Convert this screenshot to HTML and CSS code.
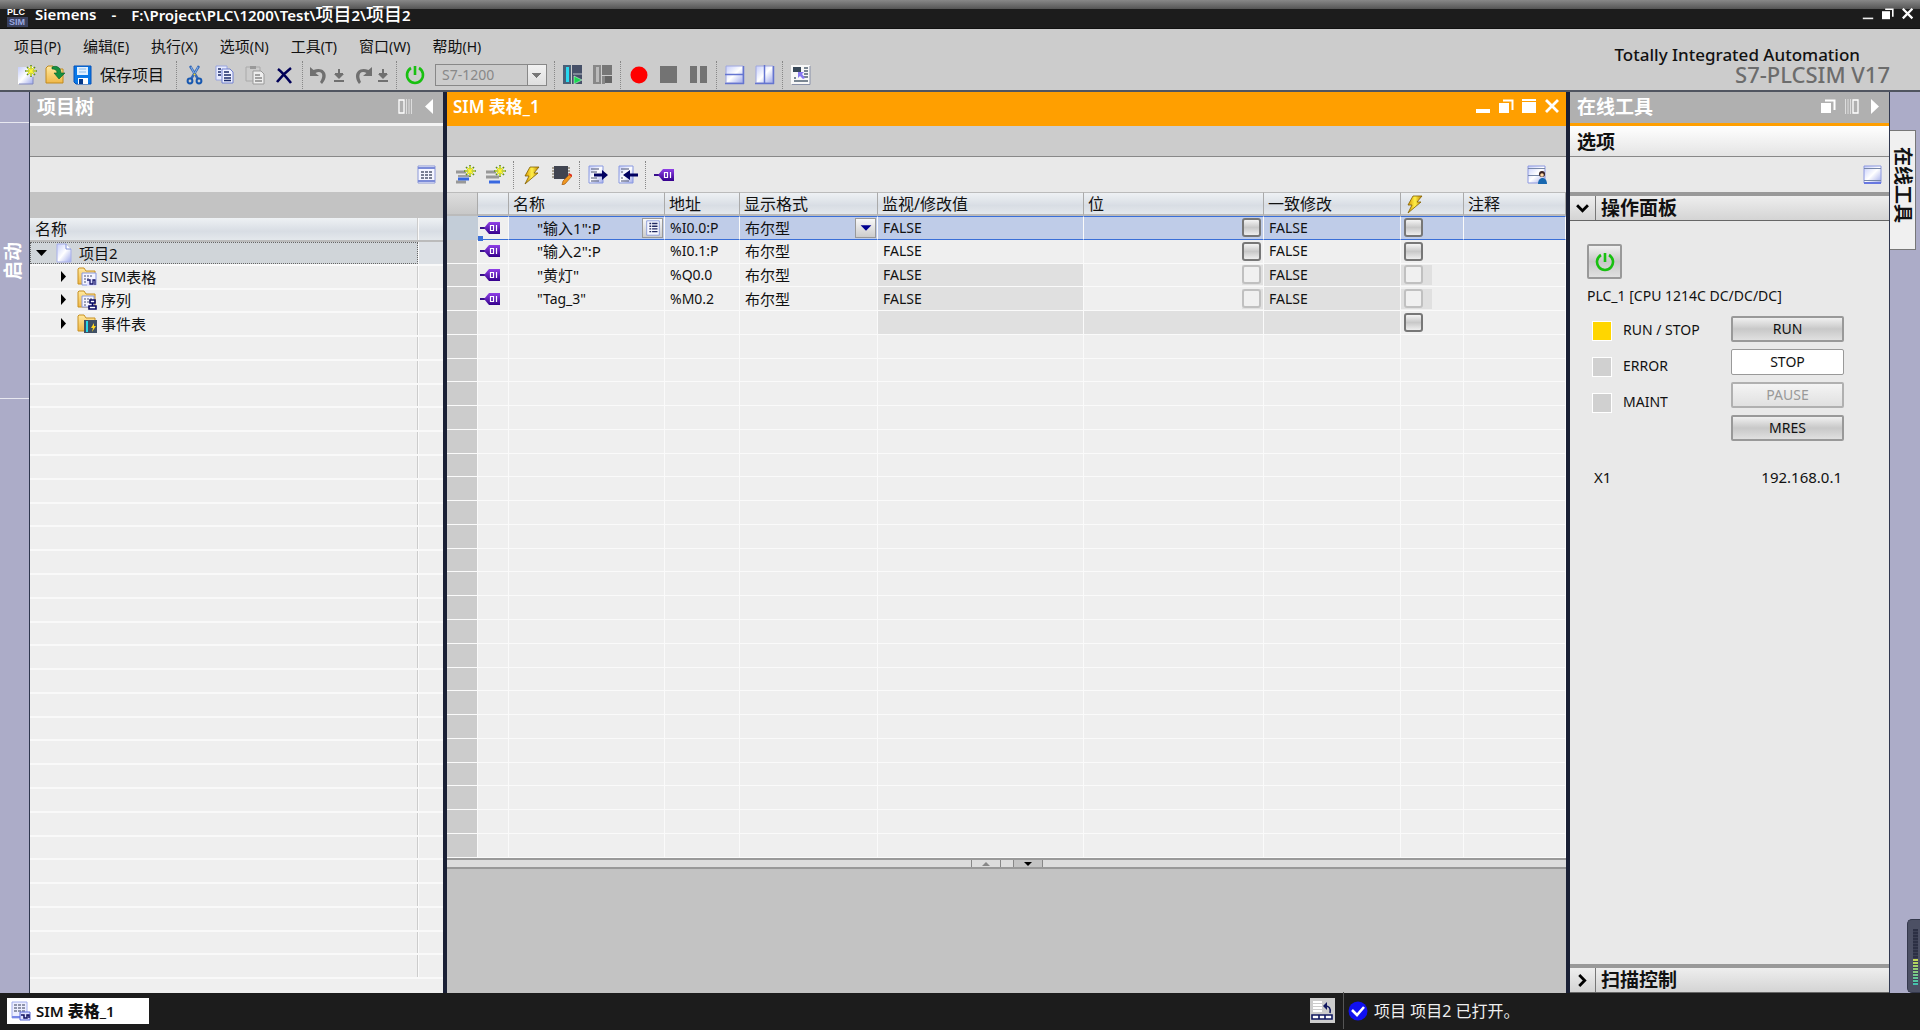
FILE: index.html
```html
<!DOCTYPE html>
<html lang="zh-CN">
<head>
    <meta charset="UTF-8">
    <meta name="viewport" content="width=device-width, initial-scale=1.0">
    <title>Siemens - S7-PLCSIM V17</title>
    <link rel="stylesheet" href="styles.css">
</head>
<body>
    <!-- Icon definitions -->
    <svg class="defs" width="0" height="0">
        <defs>
            <linearGradient id="gPaper" x1="0" y1="0" x2="1" y2="1"><stop offset="0" stop-color="#c5cdfa"/><stop offset=".5" stop-color="#fff"/><stop offset="1" stop-color="#9fa9ea"/></linearGradient>
            <linearGradient id="gFolder" x1="0" y1="0" x2="0" y2="1"><stop offset="0" stop-color="#ffe9a0"/><stop offset="1" stop-color="#f0b848"/></linearGradient>
            <linearGradient id="gTag" x1="0" y1="0" x2="0" y2="1"><stop offset="0" stop-color="#9040e8"/><stop offset="1" stop-color="#35008c"/></linearGradient>
            <linearGradient id="gFlash" x1="0" y1="0" x2="1" y2="0"><stop offset="0" stop-color="#d89400"/><stop offset=".5" stop-color="#fff04a"/><stop offset="1" stop-color="#c08000"/></linearGradient>
            <symbol id="star" viewBox="0 0 12 12"><path d="M6 0v12M0 6h12M2 2l8 8M10 2l-8 8" stroke="#5c8a2c" stroke-width="1.6"/><path d="M6 1v10M1 6h10M3 3l6 6M9 3l-6 6" stroke="#fff733" stroke-width="1.2"/></symbol>
            <symbol id="new" viewBox="0 0 20 20"><path d="M1 2h15v17H1z" fill="url(#gPaper)"/><path d="M16 12v7H2" fill="none" stroke="#8088c0"/><use href="#star" x="8" y="0" width="12" height="12"/></symbol>
            <symbol id="open" viewBox="0 0 20 20"><path d="M1 3l2-2h5l2 3h8v14H1z" fill="url(#gFolder)" stroke="#c08a20"/><path d="M7 2c5-2 9 1 9 6h4l-6 6-5-6h3c0-3-2-4-5-4z" fill="#159040" stroke="#086028" stroke-width=".6"/></symbol>
            <symbol id="save" viewBox="0 0 20 20"><path d="M1 1h17v18H3l-2-2z" fill="#0878e8" stroke="#0450b8"/><path d="M4 2h11v8H4z" fill="#e0f0ff"/><path d="M6 4h7M6 7h7" stroke="#88b8e8"/><path d="M5 13h10v6H5z" fill="#fff"/><path d="M6 14h4v5H6z" fill="#063888"/></symbol>
            <symbol id="cut" viewBox="0 0 20 20"><path d="M5 1l8 13M14 1L6 14" stroke="#3468b8" stroke-width="2.4"/><path d="M6 2l3 6M13 2l-3 6" stroke="#8ab4e8"/><circle cx="5" cy="16" r="2.4" fill="none" stroke="#1858b0" stroke-width="2"/><circle cx="14" cy="16" r="2.4" fill="none" stroke="#1858b0" stroke-width="2"/><circle cx="9.500" cy="9.500" r="1" fill="#ffd820"/></symbol>
            <symbol id="copy" viewBox="0 0 20 20"><path d="M1 1h11v14H1z" fill="#e8ecff" stroke="#98a4e0"/><path d="M3 4h3M3 7h3M3 10h3" stroke="#182868" stroke-width="1.4"/><path d="M7 4h8l3 3v11H7z" fill="#eef0ff" stroke="#7080d0"/><path d="M9 7h5M9 10h7M9 13h7M9 15.500h7" stroke="#182868" stroke-width="1.400"/></symbol>
            <symbol id="paste" viewBox="0 0 20 20"><path d="M1 2h14v14H1z" fill="#ccc" stroke="#aaa"/><path d="M5 1h6v3H5z" fill="#999"/><path d="M8 6h8l3 3v10H8z" fill="#eee" stroke="#999"/><path d="M10 10h5M10 13h7M10 16h7" stroke="#888" stroke-width="1.400"/></symbol>
            <symbol id="delete" viewBox="0 0 20 20"><path d="M3 4c4 3 9 9 13 14M16 3C12 6 6 12 2 17" stroke="#000058" stroke-width="2.600" fill="none"/></symbol>
            <symbol id="undo" viewBox="0 0 20 20"><path d="M1 2v9h9L6.500 8C12 5 16 9 11 17l2 2C21 10 15 1 4.500 5z" fill="#707070"/></symbol>
            <symbol id="redo" viewBox="0 0 20 20"><path d="M19 2v9h-9l3.500-3C8 5 4 9 8 17l-2 2C-1 10 5 1 15.500 5z" fill="#707070"/></symbol>
            <symbol id="plusminus" viewBox="0 0 12 20"><path d="M6 4v6M2 9h8M1 16h10" stroke="#707070" stroke-width="2"/><path d="M1 9h10l-5 5z" fill="#707070"/></symbol>
            <symbol id="power" viewBox="0 0 20 20"><path d="M6 3a8 8 0 1 0 8 0" fill="none" stroke="#18c010" stroke-width="2.600"/><path d="M10 1v9" stroke="#18c010" stroke-width="2.600"/></symbol>
            <symbol id="simstart" viewBox="0 0 20 20"><path d="M0 0h8v19H0z" fill="#4a6078"/><path d="M3 2h3v15H3z" fill="#28d8f0"/><path d="M9 0h10v19H9z" fill="#465068"/><path d="M10 8h9v2h-9z" fill="#808898"/><path d="M11 11l8 4-8 4z" fill="#18d850" stroke="#fff" stroke-width=".5"/></symbol>
            <symbol id="simstop" viewBox="0 0 20 20"><path d="M0 0h8v19H0z" fill="#888"/><path d="M3 2h3v15H3z" fill="#bbb"/><path d="M9 0h10v10H9z" fill="#777"/><path d="M9 11h3v8H9z" fill="#888"/><path d="M12 11h7v7h-7z" fill="#666"/></symbol>
            <symbol id="record" viewBox="0 0 20 20"><circle cx="10" cy="10" r="8.500" fill="#f00"/></symbol>
            <symbol id="stop" viewBox="0 0 20 20"><path d="M1 1h17v17H1z" fill="#737373"/></symbol>
            <symbol id="pause" viewBox="0 0 20 20"><path d="M1 1h7v17H1zM11 1h7v17h-7z" fill="#737373"/></symbol>
            <symbol id="splith" viewBox="0 0 20 20"><path d="M1 1h17v17H1z" fill="url(#gPaper)" stroke="#a0a8e0"/><path d="M0 9.500h19M0 18.500h19M18.500 1v18" stroke="#6474d0" stroke-width="1.500"/></symbol>
            <symbol id="splitv" viewBox="0 0 20 20"><path d="M1 1h17v17H1z" fill="url(#gPaper)" stroke="#a0a8e0"/><path d="M9.500 0v19M0 18.500h19M18.500 1v18" stroke="#6474d0" stroke-width="1.500"/></symbol>
            <symbol id="report" viewBox="0 0 20 20"><path d="M0 0h19v19H0z" fill="#f8f8f8"/><path d="M19 1v18.500H1" fill="none" stroke="#8890a8"/><path d="M2 2h8v5H2z" fill="#384858"/><path d="M13 3h4M13 6h4M13 9h4M12 12h5M3 13h2M3 16h14" stroke="#506070" stroke-width="1.300"/><path d="M7 7h6l-2 2 3 4-2 1-3-3-2 2z" fill="#8878f0"/></symbol>
            <symbol id="gridview" viewBox="0 0 20 20"><path d="M1 1h17v17H1z" fill="#f5f6ff" stroke="#8c98d8"/><path d="M1 3h17M1 16h17" stroke="#7c8cd8" stroke-width="2"/><path d="M4 7h3m1 0h3m1 0h3M4 10h3m1 0h3m1 0h3M4 13h3m1 0h3m1 0h3" stroke="#505870" stroke-width="1.300"/></symbol>
            <symbol id="window" viewBox="0 0 20 20"><path d="M1 1h17v17H1z" fill="url(#gPaper)" stroke="#8c98e0"/><path d="M1 3.500h17M1 15.500h17" stroke="#7888a8"/><path d="M1 18h17" stroke="#6878e0" stroke-width="2"/></symbol>
            <symbol id="userwin" viewBox="0 0 20 20"><path d="M1 1h17v17H1z" fill="url(#gPaper)" stroke="#8c98e0"/><path d="M1 3.500h17M1 10.500h17" stroke="#7888a8"/><circle cx="15" cy="9" r="3" fill="#382020"/><circle cx="15" cy="10" r="1.800" fill="#ffd8a8"/><path d="M11 19c0-8 9-8 9 0z" fill="#1868b0"/></symbol>
            <symbol id="addrow" viewBox="0 0 20 20"><path d="M0 7h10M0 17h10" stroke="#989898" stroke-width="3"/><path d="M2 11h12" stroke="#a0a0a0" stroke-width="2"/><path d="M2 14h11" stroke="#3868e0" stroke-width="3"/><use href="#star" x="8" y="0" width="12" height="12"/></symbol>
            <symbol id="insrow" viewBox="0 0 20 20"><path d="M0 7h10M0 12h13" stroke="#989898" stroke-width="3"/><path d="M3 17h11" stroke="#3868e0" stroke-width="3"/><use href="#star" x="8" y="0" width="12" height="12"/></symbol>
            <symbol id="flash" viewBox="0 0 20 20"><path d="M8 2h9l-5 6h4L3 19l4-8H3z" fill="url(#gFlash)" stroke="#806000" stroke-width=".8"/></symbol>
            <symbol id="chip" viewBox="0 0 20 20"><path d="M0 3h18M0 6h18M0 9h18M0 12h16" stroke="#908878" stroke-width="1.500"/><path d="M2 1h14v13H2z" fill="#404450"/><path d="M18 9l2 2-7 8-3 1 1-4z" fill="#f09820" stroke="#a05810" stroke-width=".7"/><path d="M17 9l3 2" stroke="#e03020" stroke-width="2"/></symbol>
            <symbol id="export" viewBox="0 0 20 20"><path d="M1 1h14v17H1z" fill="url(#gPaper)" stroke="#8898e0"/><path d="M3 4h8M3 7h6M3 13h6M3 16h8" stroke="#485070"/><path d="M6 8.500h8V5l6 5-6 5v-3.500H6z" fill="#000060"/></symbol>
            <symbol id="import" viewBox="0 0 20 20"><path d="M1 1h14v17H1z" fill="url(#gPaper)" stroke="#8898e0"/><path d="M3 4h8M3 7h2M3 13h2M3 16h8" stroke="#485070"/><path d="M20 8.500h-8V5l-7 5 7 5v-3.500h8z" fill="#000060"/></symbol>
            <symbol id="tag" viewBox="0 0 20 20"><path d="M0 10h5" stroke="#38108c" stroke-width="2"/><path d="M4 10l5-6h11v12H9z" fill="url(#gTag)"/><path d="M10.500 7.500h3v5h-3z" fill="none" stroke="#fff" stroke-width="1.200"/><path d="M16.500 7v6" stroke="#fff" stroke-width="1.200"/></symbol>
            <symbol id="list" viewBox="0 0 20 20"><path d="M3 2h14v16H3z" fill="#f6f7ff" stroke="#8898d8"/><path d="M6 5h2m1 0h6M6 8h2m1 0h6M6 11h2m1 0h6M6 14h2m1 0h6" stroke="#202860" stroke-width="1.500"/></symbol>
            <symbol id="seldown" viewBox="0 0 20 20"><path d="M4 7h12l-6 6z" fill="#000090"/></symbol>
            <symbol id="page" viewBox="0 0 20 20"><path d="M2 1h9l5 5v13H2z" fill="url(#gPaper)" stroke="#a8b0e8"/><path d="M11 1v5h5" fill="#fff" stroke="#8090d8"/></symbol>
            <symbol id="foldsim" viewBox="0 0 20 20"><path d="M1 17V2l1-1h5l2 3h9v13z" fill="url(#gFolder)" stroke="#c89020"/><path d="M5 6h14v12H5z" fill="#f4f4ff" stroke="#8898e0"/><path d="M7 9h2m1 0h2m1 0h2M7 12h2m1 0h2M7 15h2" stroke="#485070"/><path d="M10 12h9v7h-9z" fill="#e0e0ff"/><path d="M10 13h3v4h3v-4h2v5" fill="none" stroke="#18186c" stroke-width="1.300"/></symbol>
            <symbol id="foldseq" viewBox="0 0 20 20"><path d="M1 17V2l1-1h5l2 3h9v13z" fill="url(#gFolder)" stroke="#c89020"/><path d="M5 6h12v11H5z" fill="#f4f4ff" stroke="#8898e0"/><path d="M7 9h2m1 0h2m1 0h2M7 12h2m1 0h2M7 15h2" stroke="#485070"/><path d="M13 10h5v3h-5zM12 16h7v3h-7zM15.500 13v3" fill="#fff" stroke="#080860" stroke-width="1.600"/></symbol>
            <symbol id="foldevt" viewBox="0 0 20 20"><path d="M1 17V2l1-1h5l2 3h9v13z" fill="url(#gFolder)" stroke="#c89020"/><path d="M7 6h13v13H7z" fill="#405064"/><path d="M9 7h2v11H9z" fill="#28d8e8"/><path d="M17 9l-3 5h2l-1 4 4-6h-2z" fill="#ffd820"/></symbol>
            <symbol id="simtab" viewBox="0 0 20 20"><path d="M1 1h15v16H1z" fill="#eceeff" stroke="#a0acec"/><path d="M3 4h3m1 0h3m1 0h3M3 7h3m1 0h3m1 0h3M3 10h3m1 0h3m1 0h3" stroke="#707890" stroke-width="1.300"/><path d="M1 16h8" stroke="#7888e8" stroke-width="2"/><path d="M9 11h10v8H9z" fill="#dfe2ff" stroke="#5868d8"/><path d="M10 14h3v3h3v-3h2v3" fill="none" stroke="#101060" stroke-width="1.500"/></symbol>
            <symbol id="columns" viewBox="0 0 15 15"><path d="M1 1h5v13H1z" fill="none" stroke="#fff" stroke-width="1.300"/><path d="M8.500 0v15M11 0v15M13.500 0v15" stroke="#ddd"/></symbol>
            <symbol id="restore" viewBox="0 0 15 15"><path d="M0 4h10v10H0z" fill="#fff"/><path d="M4 1.500h9.500V11" fill="none" stroke="#fff" stroke-width="2"/></symbol>
            <symbol id="minimize" viewBox="0 0 15 15"><path d="M0 10h14v4H0z" fill="#fff"/></symbol>
            <symbol id="minline" viewBox="0 0 15 15"><path d="M1 13h13" stroke="#eee" stroke-width="2"/></symbol>
            <symbol id="maximize" viewBox="0 0 15 15"><path d="M0 0h14v2H0zM0 3h14v11H0z" fill="#fff"/></symbol>
            <symbol id="close" viewBox="0 0 15 15"><path d="M1 1l12 12M13 1L1 13" stroke="#fff" stroke-width="2.800"/></symbol>
            <symbol id="left" viewBox="0 0 15 15"><path d="M12 0v15L4 7.500z" fill="#fff"/></symbol>
            <symbol id="right" viewBox="0 0 15 15"><path d="M4 0v15l8-7.500z" fill="#fff"/></symbol>
            <symbol id="treeopen" viewBox="0 0 12 12"><path d="M0 3h11L5.500 9z" fill="#000"/></symbol>
            <symbol id="treeclosed" viewBox="0 0 12 12"><path d="M3 0v11l5-5.500z" fill="#000"/></symbol>
            <symbol id="chevdown" viewBox="0 0 12 12"><path d="M1 3l5 5 5-5" fill="none" stroke="#000" stroke-width="2.600"/></symbol>
            <symbol id="chevright" viewBox="0 0 12 12"><path d="M3 1l5 5-5 5" fill="none" stroke="#000" stroke-width="2.600"/></symbol>
        </defs>
    </svg>

    <!-- Title bar -->
    <header class="titlebar">
        <div class="logo"><span>PLC</span><span class="logo-sim">SIM</span></div>
        <h1><span>Siemens</span><span>-</span><span>F:\Project\PLC\1200\Test\<b>项目</b>2\<b>项目</b>2</span></h1>
        <div class="window-buttons">
            <button aria-label="最小化"><svg><use href="#minline"/></svg></button>
            <button aria-label="还原"><svg><use href="#restore"/></svg></button>
            <button aria-label="关闭"><svg><use href="#close"/></svg></button>
        </div>
    </header>

    <!-- Menu and main toolbar -->
    <div class="topbar">
        <div class="topbar-left">
            <nav class="menu">
                <a href="#">项目<span>(P)</span></a>
                <a href="#">编辑<span>(E)</span></a>
                <a href="#">执行<span>(X)</span></a>
                <a href="#">选项<span>(N)</span></a>
                <a href="#">工具<span>(T)</span></a>
                <a href="#">窗口<span>(W)</span></a>
                <a href="#">帮助<span>(H)</span></a>
            </nav>
            <div class="toolbar main-toolbar">
                <div class="tool-group tool-file">
                    <button class="tool" aria-label="新建"><svg><use href="#new"/></svg></button>
                    <button class="tool" aria-label="打开"><svg><use href="#open"/></svg></button>
                    <button class="tool tool-save"><svg><use href="#save"/></svg>保存项目</button>
                </div>
                <div class="tool-group">
                    <button class="tool" aria-label="剪切"><svg><use href="#cut"/></svg></button>
                    <button class="tool" aria-label="复制"><svg><use href="#copy"/></svg></button>
                    <button class="tool" aria-label="粘贴"><svg><use href="#paste"/></svg></button>
                    <button class="tool" aria-label="删除"><svg><use href="#delete"/></svg></button>
                </div>
                <div class="tool-group tool-history">
                    <button class="tool tool-wide" aria-label="撤销"><svg><use href="#undo"/></svg><svg class="narrow"><use href="#plusminus"/></svg></button>
                    <button class="tool tool-wide" aria-label="重做"><svg><use href="#redo"/></svg><svg class="narrow"><use href="#plusminus"/></svg></button>
                </div>
                <div class="tool-group">
                    <button class="tool" aria-label="电源"><svg><use href="#power"/></svg></button>
                    <select class="cpu-select" aria-label="CPU" disabled><option>S7-1200</option></select>
                </div>
                <div class="tool-group">
                    <button class="tool" aria-label="启动仿真"><svg><use href="#simstart"/></svg></button>
                    <button class="tool" aria-label="停止仿真"><svg><use href="#simstop"/></svg></button>
                </div>
                <div class="tool-group">
                    <button class="tool" aria-label="录制"><svg><use href="#record"/></svg></button>
                    <button class="tool" aria-label="停止"><svg><use href="#stop"/></svg></button>
                    <button class="tool" aria-label="暂停"><svg><use href="#pause"/></svg></button>
                </div>
                <div class="tool-group">
                    <button class="tool" aria-label="水平拆分"><svg><use href="#splith"/></svg></button>
                    <button class="tool" aria-label="垂直拆分"><svg><use href="#splitv"/></svg></button>
                </div>
                <div class="tool-group">
                    <button class="tool" aria-label="报告"><svg><use href="#report"/></svg></button>
                </div>
            </div>
        </div>
        <div class="brand">
            <p class="brand-name">Totally Integrated Automation</p>
            <p class="brand-product">S7-PLCSIM V17</p>
        </div>
    </div>

    <main>
        <!-- Left side strip -->
        <aside class="strip strip-left"><div class="strip-tab">启动</div></aside>

        <!-- Project tree -->
        <section class="panel tree-panel">
            <div class="panel-head">
                <h2>项目树</h2>
                <button aria-label="列"><svg><use href="#columns"/></svg></button>
                <button aria-label="折叠"><svg><use href="#left"/></svg></button>
            </div>
            <div class="band"></div>
            <div class="toolbar tree-toolbar">
                <button class="tool" aria-label="视图"><svg><use href="#gridview"/></svg></button>
            </div>
            <div class="tree-gap"></div>
            <div class="tree-row tree-head"><span class="tree-name">名称</span><span class="tree-side"></span></div>
            <div class="tree" id="tree">
                <div class="tree-row selected"><span class="tree-name"><svg class="arrow"><use href="#treeopen"/></svg><svg class="icon"><use href="#page"/></svg>项目2</span><span class="tree-side"></span></div>
                <div class="tree-row child"><span class="tree-name"><svg class="arrow"><use href="#treeclosed"/></svg><svg class="icon"><use href="#foldsim"/></svg><span class="latin">SIM</span>表格</span><span class="tree-side"></span></div>
                <div class="tree-row child"><span class="tree-name"><svg class="arrow"><use href="#treeclosed"/></svg><svg class="icon"><use href="#foldseq"/></svg>序列</span><span class="tree-side"></span></div>
                <div class="tree-row child"><span class="tree-name"><svg class="arrow"><use href="#treeclosed"/></svg><svg class="icon"><use href="#foldevt"/></svg>事件表</span><span class="tree-side"></span></div>
            </div>
        </section>

        <!-- SIM table editor -->
        <section class="panel editor">
            <div class="panel-head active">
                <h2>SIM 表格_1</h2>
                <button aria-label="最小化"><svg><use href="#minimize"/></svg></button>
                <button aria-label="还原"><svg><use href="#restore"/></svg></button>
                <button aria-label="最大化"><svg><use href="#maximize"/></svg></button>
                <button aria-label="关闭"><svg><use href="#close"/></svg></button>
            </div>
            <div class="band"></div>
            <div class="toolbar">
                <div class="tool-group">
                    <button class="tool" aria-label="插入行"><svg><use href="#addrow"/></svg></button>
                    <button class="tool" aria-label="添加行"><svg><use href="#insrow"/></svg></button>
                </div>
                <div class="tool-group">
                    <button class="tool" aria-label="修改"><svg><use href="#flash"/></svg></button>
                    <button class="tool" aria-label="修改值"><svg><use href="#chip"/></svg></button>
                </div>
                <div class="tool-group">
                    <button class="tool" aria-label="导出"><svg><use href="#export"/></svg></button>
                    <button class="tool" aria-label="导入"><svg><use href="#import"/></svg></button>
                </div>
                <div class="tool-group">
                    <button class="tool" aria-label="变量"><svg><use href="#tag"/></svg></button>
                </div>
                <button class="tool tool-end" aria-label="布局"><svg><use href="#userwin"/></svg></button>
            </div>
            <div class="table-wrap">
                <table class="sim-table">
                    <colgroup>
                        <col class="c-gutter"><col class="c-icon"><col class="c-name"><col class="c-addr"><col class="c-format">
                        <col class="c-value"><col class="c-bits"><col class="c-modify"><col class="c-flash"><col>
                    </colgroup>
                    <thead>
                        <tr><th></th><th></th><th>名称</th><th>地址</th><th>显示格式</th><th>监视/修改值</th><th>位</th><th>一致修改</th><th><svg class="icon"><use href="#flash"/></svg></th><th>注释</th></tr>
                    </thead>
                    <tbody id="simRows">
                        <tr class="selected">
                            <td><i class="handle"></i></td>
                            <td><svg class="icon"><use href="#tag"/></svg></td>
                            <td class="name"><div class="cell">"输入1":P<button class="cell-button" aria-label="选择变量"><svg><use href="#list"/></svg></button></div></td>
                            <td>%I0.0:P</td>
                            <td class="cjk"><div class="cell">布尔型<button class="cell-button" aria-label="选择格式"><svg><use href="#seldown"/></svg></button></div></td>
                            <td>FALSE</td>
                            <td class="bits"><label><input type="checkbox" aria-label="位"></label></td>
                            <td>FALSE</td>
                            <td class="mod"><label><input type="checkbox" aria-label="修改"></label></td>
                            <td></td>
                        </tr>
                        <tr>
                            <td></td>
                            <td><svg class="icon"><use href="#tag"/></svg></td>
                            <td class="name">"输入2":P</td>
                            <td>%I0.1:P</td>
                            <td class="cjk">布尔型</td>
                            <td>FALSE</td>
                            <td class="bits"><label><input type="checkbox" aria-label="位"></label></td>
                            <td>FALSE</td>
                            <td class="mod"><label><input type="checkbox" aria-label="修改"></label></td>
                            <td></td>
                        </tr>
                        <tr>
                            <td></td>
                            <td><svg class="icon"><use href="#tag"/></svg></td>
                            <td class="name">"黄灯"</td>
                            <td>%Q0.0</td>
                            <td class="cjk">布尔型</td>
                            <td class="off">FALSE</td>
                            <td class="bits"><label class="off"><input type="checkbox" aria-label="位" disabled></label></td>
                            <td class="off">FALSE</td>
                            <td class="mod"><label class="off"><input type="checkbox" aria-label="修改" disabled></label></td>
                            <td></td>
                        </tr>
                        <tr>
                            <td></td>
                            <td><svg class="icon"><use href="#tag"/></svg></td>
                            <td class="name"><span class="latin">"Tag_3"</span></td>
                            <td>%M0.2</td>
                            <td class="cjk">布尔型</td>
                            <td class="off">FALSE</td>
                            <td class="bits"><label class="off"><input type="checkbox" aria-label="位" disabled></label></td>
                            <td class="off">FALSE</td>
                            <td class="mod"><label class="off"><input type="checkbox" aria-label="修改" disabled></label></td>
                            <td></td>
                        </tr>
                        <tr>
                            <td></td><td></td><td></td><td></td><td></td>
                            <td class="off"></td><td class="off"></td><td class="off"></td>
                            <td class="mod"><label><input type="checkbox" aria-label="修改"></label></td>
                            <td></td>
                        </tr>
                    </tbody>
                </table>
            </div>
            <div class="splitter">
                <button aria-label="向上"><svg viewBox="0 0 8 4"><path d="M0 4l4-4 4 4z" fill="#888"/></svg></button>
                <button aria-label="向下" class="down"><svg viewBox="0 0 8 4"><path d="M0 0l4 4 4-4z" fill="#000"/></svg></button>
            </div>
            <div class="editor-bottom"></div>
        </section>

        <!-- Online tools -->
        <section class="panel online-panel">
            <div class="panel-head">
                <h2>在线工具</h2>
                <button aria-label="还原"><svg><use href="#restore"/></svg></button>
                <button aria-label="列"><svg class="flip"><use href="#columns"/></svg></button>
                <button aria-label="折叠"><svg><use href="#right"/></svg></button>
            </div>
            <h3 class="options">选项</h3>
            <div class="toolbar tree-toolbar">
                <button class="tool" aria-label="视图"><svg><use href="#window"/></svg></button>
            </div>
            <h3 class="section-head"><span><svg><use href="#chevdown"/></svg></span>操作面板</h3>
            <div class="operator">
                <button class="power-button" aria-label="电源"><svg><use href="#power"/></svg></button>
                <p>PLC_1 [CPU 1214C DC/DC/DC]</p>
                <div class="controls">
                    <ul class="leds">
                        <li><i class="led on"></i>RUN / STOP</li>
                        <li><i class="led"></i>ERROR</li>
                        <li><i class="led"></i>MAINT</li>
                    </ul>
                    <div class="mode-buttons">
                        <button>RUN</button>
                        <button class="pressed">STOP</button>
                        <button disabled>PAUSE</button>
                        <button>MRES</button>
                    </div>
                </div>
                <div class="address"><span>X1</span><span>192.168.0.1</span></div>
            </div>
            <h3 class="section-head"><span><svg><use href="#chevright"/></svg></span>扫描控制</h3>
        </section>

        <!-- Right side strip -->
        <aside class="strip strip-right">
            <button class="side-tab">在线工具</button>
            <div class="meter">
                <div class="meter-bars"></div>
            </div>
        </aside>
    </main>

    <!-- Status bar -->
    <footer>
        <button class="task"><svg class="icon"><use href="#simtab"/></svg><span>SIM <b>表格</b>_1</span></button>
        <div class="status">
            <svg class="status-icon" viewBox="0 0 25 25"><path d="M0 0h25v25H0z" fill="#ccc"/><path d="M3 4h9M3 7h9M3 10h9M3 13h9" stroke="#fff" stroke-width="2"/><path d="M2 17h20v4H2z" fill="#fff" stroke="#101860" stroke-width="1.600"/><path d="M9 17v4M15 17v4" stroke="#101860" stroke-width="1.600"/><path d="M20 15c1-5-1-7-5-7" fill="none" stroke="#101860" stroke-width="1.600"/><path d="M13 8l4-4v8z" fill="#101860"/></svg>
            <span class="message"><svg viewBox="0 0 20 20"><circle cx="10" cy="10" r="9.500" fill="#1010f0"/><path d="M4 9l5 5 7-8" fill="none" stroke="#fff" stroke-width="2.600"/></svg>项目 项目2 已打开。</span>
        </div>
    </footer>
    <script src="script.js"></script>
</body>
</html>
```
FILE: styles.css
```css
/* Basic reset */
* {
    margin: 0;
    padding: 0;
    box-sizing: border-box;
}

body {
    display: flex;
    flex-direction: column;
    height: 100vh;
    overflow: hidden;
    background-color: #1c1c1c;
    color: #111;
    font-family: "Noto Sans", "Noto Sans CJK SC", sans-serif;
    font-size: 14px;
    line-height: 20px;
}

button {
    border: none;
    background: none;
    font: inherit;
    color: inherit;
}

svg {
    display: block;
    flex: none;
}

.defs {
    position: absolute;
}

.latin {
    font-size: 14px;
}

.icon {
    width: 20px;
    height: 20px;
}

/* Title bar */
.titlebar {
    display: flex;
    align-items: center;
    flex: none;
    height: 29px;
    padding: 0 6px 0 7px;
    background: linear-gradient(#888, #555 9px, #1c1c1c 9px);
    border-bottom: 1px solid #111;
    color: #fff;
}

.logo {
    display: flex;
    flex-direction: column;
    width: 21px;
    margin-top: 5px;
    font-family: "Liberation Sans", sans-serif;
    font-size: 9px;
    font-weight: 700;
    line-height: 10px;
}

.logo-sim {
    padding-left: 2px;
    background-color: #39405c;
    color: #9aa8e0;
}

.titlebar h1 {
    display: flex;
    gap: 15px;
    margin-left: 7px;
    font-size: 15px;
    font-weight: 600;
}

.titlebar b {
    font-size: 18px;
    font-weight: 500;
}

.window-buttons {
    display: flex;
    gap: 8px;
    margin-left: auto;
}

.window-buttons svg {
    width: 12px;
    height: 12px;
}

/* Menu and main toolbar */
.topbar {
    display: flex;
    justify-content: space-between;
    flex: none;
    height: 63px;
    background-color: #ccc;
    border-bottom: 2px solid #505560;
}

.menu {
    display: flex;
    gap: 22px;
    height: 30px;
    padding: 7px 0 0 14px;
}

.menu a {
    color: #111;
    font-size: 15px;
    text-decoration: none;
}

.menu span {
    font-size: 14px;
}

.toolbar {
    display: flex;
    align-items: center;
    flex: none;
    height: 35px;
    background-color: #e9e9e9;
}

.main-toolbar {
    height: 31px;
    padding-left: 8px;
    background: none;
}

.tool-group {
    display: flex;
    align-items: center;
    gap: 10px;
    height: 28px;
    padding: 0 7px 0 8px;
    border-left: 1px dotted #888;
}

.tool-group:first-child {
    border-left-color: transparent;
}

.tool-file {
    gap: 8px;
}

.tool {
    display: flex;
    align-items: center;
    height: 20px;
}

.tool svg {
    width: 20px;
    height: 20px;
}

.tool-save {
    gap: 7px;
    padding-right: 5px;
    font-size: 16px;
}

.tool-history {
    gap: 8px;
    padding-left: 6px;
}

.tool-wide {
    gap: 4px;
}

.tool .narrow {
    width: 12px;
}

.tool-end {
    margin-left: auto;
    margin-right: 19px;
}

.cpu-select {
    width: 112px;
    height: 22px;
    padding-left: 6px;
    appearance: none;
    border: 1px solid #888;
    border-radius: 0;
    background: linear-gradient(#888, #888) right 18px top / 1px 22px no-repeat,
        linear-gradient(45deg, transparent 50%, #777 50%) right 9px top 8px / 5px 5px no-repeat,
        linear-gradient(315deg, transparent 50%, #777 50%) right 4px top 8px / 5px 5px no-repeat,
        linear-gradient(#f2f2f2, #ddd) right top / 18px 22px no-repeat,
        #ccc;
    color: #888;
    font: inherit;
    opacity: 1;
}

.brand {
    padding: 16px 30px 0 0;
    text-align: right;
}

.brand-name {
    padding-right: 30px;
    font-size: 17px;
    font-weight: 500;
}

.brand-product {
    color: #6c6c6c;
    font-size: 22px;
    font-weight: 500;
    line-height: 18px;
}

/* Main layout */
main {
    display: flex;
    flex: 1;
    min-height: 0;
}

.strip {
    display: flex;
    flex: none;
    flex-direction: column;
    background-color: #acacc8;
}

.strip-left {
    width: 30px;
    padding-top: 30px;
    border-right: 1px solid #303850;
}

.strip-tab {
    display: flex;
    align-items: center;
    justify-content: center;
    height: 277px;
    padding-left: 4px;
    border: solid #e8e8f0;
    border-width: 1px 0;
    color: #fff;
    font-size: 19px;
    font-weight: 600;
    writing-mode: vertical-rl;
    text-orientation: sideways;
    transform: rotate(180deg);
}

.strip-right {
    width: 31px;
    padding-top: 38px;
    border-left: 1px solid #303850;
}

.side-tab {
    width: 26px;
    height: 120px;
    padding-top: 16px;
    background-color: #f0f0f0;
    border: 1px solid #777;
    border-left: none;
    font-size: 19px;
    font-weight: 700;
    line-height: 24px;
    text-align: left;
    writing-mode: vertical-rl;
    text-orientation: sideways;
}

.meter {
    width: 13px;
    height: 74px;
    margin: auto 0 0 auto;
    padding: 9px 2px 8px 5px;
    background-color: #4c5064;
    border: 1px solid #34384c;
    border-right: none;
    border-radius: 5px 0 0 5px;
}

.meter-bars {
    height: 56px;
    background: repeating-linear-gradient(transparent 0 2px, #3c4054 2px 3px),
        linear-gradient(#2c3044 30px, #c8d850 30px, #40c0b0);
}

/* Panels */
.panel {
    display: flex;
    flex-direction: column;
    min-width: 0;
    background-color: #efefef;
}

.panel-head {
    display: flex;
    align-items: center;
    gap: 8px;
    flex: none;
    height: 34px;
    padding: 0 7px 2px;
    background-color: #b0b0b0;
    border-bottom: 3px solid #f4f4f4;
    color: #fff;
}

.panel-head h2 {
    flex: 1;
    font-size: 19px;
    font-weight: 600;
}

.panel-head svg {
    width: 15px;
    height: 15px;
}

.panel-head .flip {
    transform: scaleX(-1);
}

.panel-head.active {
    padding: 0 6px 2px;
    background-color: #ff9f00;
    border-bottom-color: #ff9f00;
}

.panel-head.active h2 {
    font-size: 17px;
}

.band {
    flex: none;
    height: 31px;
    background-color: #ccc;
    border-bottom: 1px solid #888;
}

/* Project tree */
.tree-panel {
    width: 413px;
}

.tree-toolbar {
    justify-content: flex-end;
    padding-right: 6px;
}

.tree-gap {
    flex: none;
    height: 26px;
    background-color: #c3c3c3;
}

.tree-head {
    flex: none;
    height: 24px;
    background: linear-gradient(#eef1f4, #d8dde4 60%, #e4e8ec);
    border-bottom: 2px solid #bbb;
}

.tree-head .tree-name {
    padding-left: 5px;
    font-size: 16px;
}

.tree {
    display: flex;
    flex: 1;
    flex-direction: column;
    min-height: 0;
    padding-bottom: 14px;
}

.tree-row {
    display: flex;
}

.tree .tree-row {
    flex: 1;
    min-height: 0;
    border-bottom: 2px solid #f9f9f9;
}

.tree-name {
    display: flex;
    align-items: center;
    flex: 1;
    padding-left: 6px;
    border-right: 1px solid #ccc;
    font-size: 15px;
}

.tree-side {
    width: 25px;
    border-left: 1px solid #fafafa;
}

.tree .selected {
    background-color: #dce0e5;
}

.selected .tree-name {
    padding-left: 5px;
    background-color: #d0d5d9;
    border: 1px dotted #666;
}

.tree .arrow {
    width: 12px;
    height: 12px;
}

.tree .icon {
    margin: 0 4px 0 7px;
}

.child .tree-name {
    padding-left: 28px;
}

/* SIM table */
.editor {
    flex: 1;
    border: solid #1a2035;
    border-width: 0 4px;
}

.table-wrap {
    flex: 1;
    min-height: 0;
}

.sim-table {
    width: 100%;
    height: 100%;
    table-layout: fixed;
    border-collapse: separate;
    border-spacing: 0;
}

.c-gutter { width: 31px; }
.c-icon { width: 31px; }
.c-name { width: 156px; }
.c-addr { width: 75px; }
.c-format { width: 138px; }
.c-value { width: 206px; }
.c-bits { width: 180px; }
.c-modify { width: 137px; }
.c-flash { width: 63px; }

.sim-table th {
    height: 24px;
    padding-left: 4px;
    background: linear-gradient(#eef1f4, #d8dde4 60%, #e4e8ec);
    border-top: 1px solid #bbb;
    border-right: 1px solid #aaa;
    border-bottom: 2px solid #bbb;
    font-size: 16px;
    font-weight: 400;
    text-align: left;
}

.sim-table th:first-child {
    background: linear-gradient(#ddd, #c8c8c8);
}

.sim-table td {
    height: 22px;
    padding: 0 0 0 5px;
    border-right: 1px solid #fafafa;
    border-bottom: 1px solid #fafafa;
    line-height: 20px;
    white-space: nowrap;
}

.sim-table td:first-child {
    position: relative;
    background-color: #ccc;
}

.sim-table td:nth-child(2) {
    padding-left: 2px;
}

.sim-table .name {
    padding-left: 28px;
    font-size: 15px;
}

.sim-table .cjk {
    font-size: 15px;
}

.sim-table .off {
    background-color: #e0e0e0;
}

.sim-table .selected td {
    background-color: #bfcce8;
    border-top: 1px solid #3a6fd8;
    border-bottom: 1px solid #3a6fd8;
}

.sim-table .selected td:first-child {
    background-color: #c3cdd8;
    border-color: #c3cdd8;
}

.sim-table .selected td:nth-child(2) {
    background-color: #efefef;
}

.handle {
    position: absolute;
    right: -6px;
    bottom: -2px;
    z-index: 1;
    width: 5px;
    height: 5px;
    background-color: #3a6fd8;
}

.cell {
    display: flex;
    align-items: center;
    justify-content: space-between;
    height: 20px;
}

.cell-button {
    display: flex;
    align-items: center;
    justify-content: center;
    width: 21px;
    height: 20px;
    margin-right: 1px;
    background: linear-gradient(#f8f8f8, #ccc);
    border: 1px solid #999;
}

.cell-button svg {
    width: 18px;
    height: 18px;
}

.sim-table label {
    display: flex;
    align-items: center;
    height: 20px;
}

.sim-table .bits,
.sim-table .mod {
    padding: 0;
}

.bits label {
    width: 21px;
    margin-left: auto;
}

.mod label {
    width: 31px;
    padding-left: 3px;
}

.sim-table input {
    width: 19px;
    height: 19px;
    appearance: none;
    background: linear-gradient(#f4f4f4, #c8c8c8 50%, #eee);
    border: 2px solid #777;
    border-radius: 3px;
}

.sim-table input:disabled {
    background: #f0f0f0;
    border-color: #c0c0c0;
}

.splitter {
    display: flex;
    justify-content: center;
    gap: 12px;
    flex: none;
    height: 11px;
    background-color: #ddd;
    border-top: 2px solid #999;
    border-bottom: 2px solid #999;
}

.splitter button {
    display: flex;
    align-items: center;
    justify-content: center;
    width: 30px;
    border: solid #888;
    border-width: 0 1px;
}

.splitter .down {
    background-color: #c4c4c4;
}

.splitter svg {
    width: 8px;
    height: 4px;
}

.editor-bottom {
    flex: none;
    height: 124px;
    background-color: #c3c3c3;
}

/* Online tools */
.online-panel {
    width: 319px;
    background-color: #e9e9e9;
}

.online-panel .panel-head {
    border-bottom-color: #ff9f00;
}

.options {
    flex: none;
    height: 31px;
    padding: 6px 7px;
    background: linear-gradient(#fff, #e4e4e4);
    border-bottom: 1px solid #888;
    font-size: 19px;
}

.section-head {
    display: flex;
    align-items: center;
    flex: none;
    height: 29px;
    background: linear-gradient(#eee, #d4d4d4);
    border-top: 4px solid #999;
    border-bottom: 1px solid #666;
    font-size: 19px;
}

.section-head span {
    display: flex;
    align-items: center;
    width: 26px;
    height: 24px;
    margin-right: 5px;
    padding-left: 6px;
    border-right: 1px solid #777;
}

.section-head svg {
    width: 13px;
    height: 13px;
}

.operator {
    flex: 1;
    padding: 23px 45px 0 17px;
}

.power-button,
.mode-buttons button {
    background: linear-gradient(#f0f0f0, #c8c8c8 50%, #e0e0e0);
    border: 2px solid #999;
    border-radius: 2px;
}

.power-button {
    width: 35px;
    height: 35px;
    margin-bottom: 7px;
    padding-left: 6px;
}

.power-button svg {
    width: 20px;
    height: 20px;
}

.controls {
    display: flex;
    justify-content: space-between;
    margin-top: 10px;
}

.leds {
    display: flex;
    flex-direction: column;
    gap: 16px;
    padding: 5px 0 0 5px;
    list-style: none;
}

.leds li {
    display: flex;
    gap: 11px;
    height: 20px;
    line-height: 18px;
}

.led {
    width: 20px;
    height: 20px;
    background-color: #d0d0d0;
    border: 1px solid #fff;
}

.led.on {
    background-color: #ffd600;
}

.mode-buttons {
    display: flex;
    flex-direction: column;
    gap: 7px;
}

.mode-buttons button {
    width: 113px;
    height: 26px;
    line-height: 20px;
}

.mode-buttons .pressed {
    background: #fff;
    border-width: 1px;
}

.mode-buttons button:disabled {
    background: linear-gradient(#f4f4f4, #e0e0e0);
    border-color: #b0b0b0;
    color: #999;
}

.address {
    display: flex;
    justify-content: space-between;
    margin-top: 26px;
    padding: 0 2px 0 7px;
    font-size: 15px;
}

/* Status bar */
footer {
    display: flex;
    align-items: center;
    justify-content: space-between;
    flex: none;
    height: 37px;
    padding: 0 0 2px 7px;
    background-color: #1c1c1c;
    color: #eee;
}

.task {
    display: flex;
    align-items: center;
    gap: 5px;
    width: 142px;
    height: 26px;
    padding-left: 4px;
    background-color: #fff;
    color: #111;
    font-size: 15px;
    font-weight: 600;
}

.task b {
    font-size: 16px;
}

.status {
    display: flex;
    align-items: center;
    width: 610px;
    height: 35px;
}

.status-icon {
    width: 25px;
    height: 25px;
}

.message {
    display: flex;
    align-items: center;
    gap: 6px;
    height: 37px;
    margin-left: 8px;
    padding-left: 4px;
    border-left: 1px solid #555;
    font-size: 16px;
}

.message svg {
    width: 20px;
    height: 20px;
}
```
FILE: script.js
```js
// Fill the tree and the table with empty rows
const TREE_ROWS = 31;
const TABLE_ROWS = 27;

const tree = document.getElementById("tree");
while (tree.children.length < TREE_ROWS) {
    const row = document.createElement("div");
    row.className = "tree-row";
    row.innerHTML = '<span class="tree-name"></span><span class="tree-side"></span>';
    tree.appendChild(row);
}

const simRows = document.getElementById("simRows");
while (simRows.children.length < TABLE_ROWS) {
    const row = document.createElement("tr");
    row.innerHTML = "<td></td>".repeat(10);
    simRows.appendChild(row);
}
```
